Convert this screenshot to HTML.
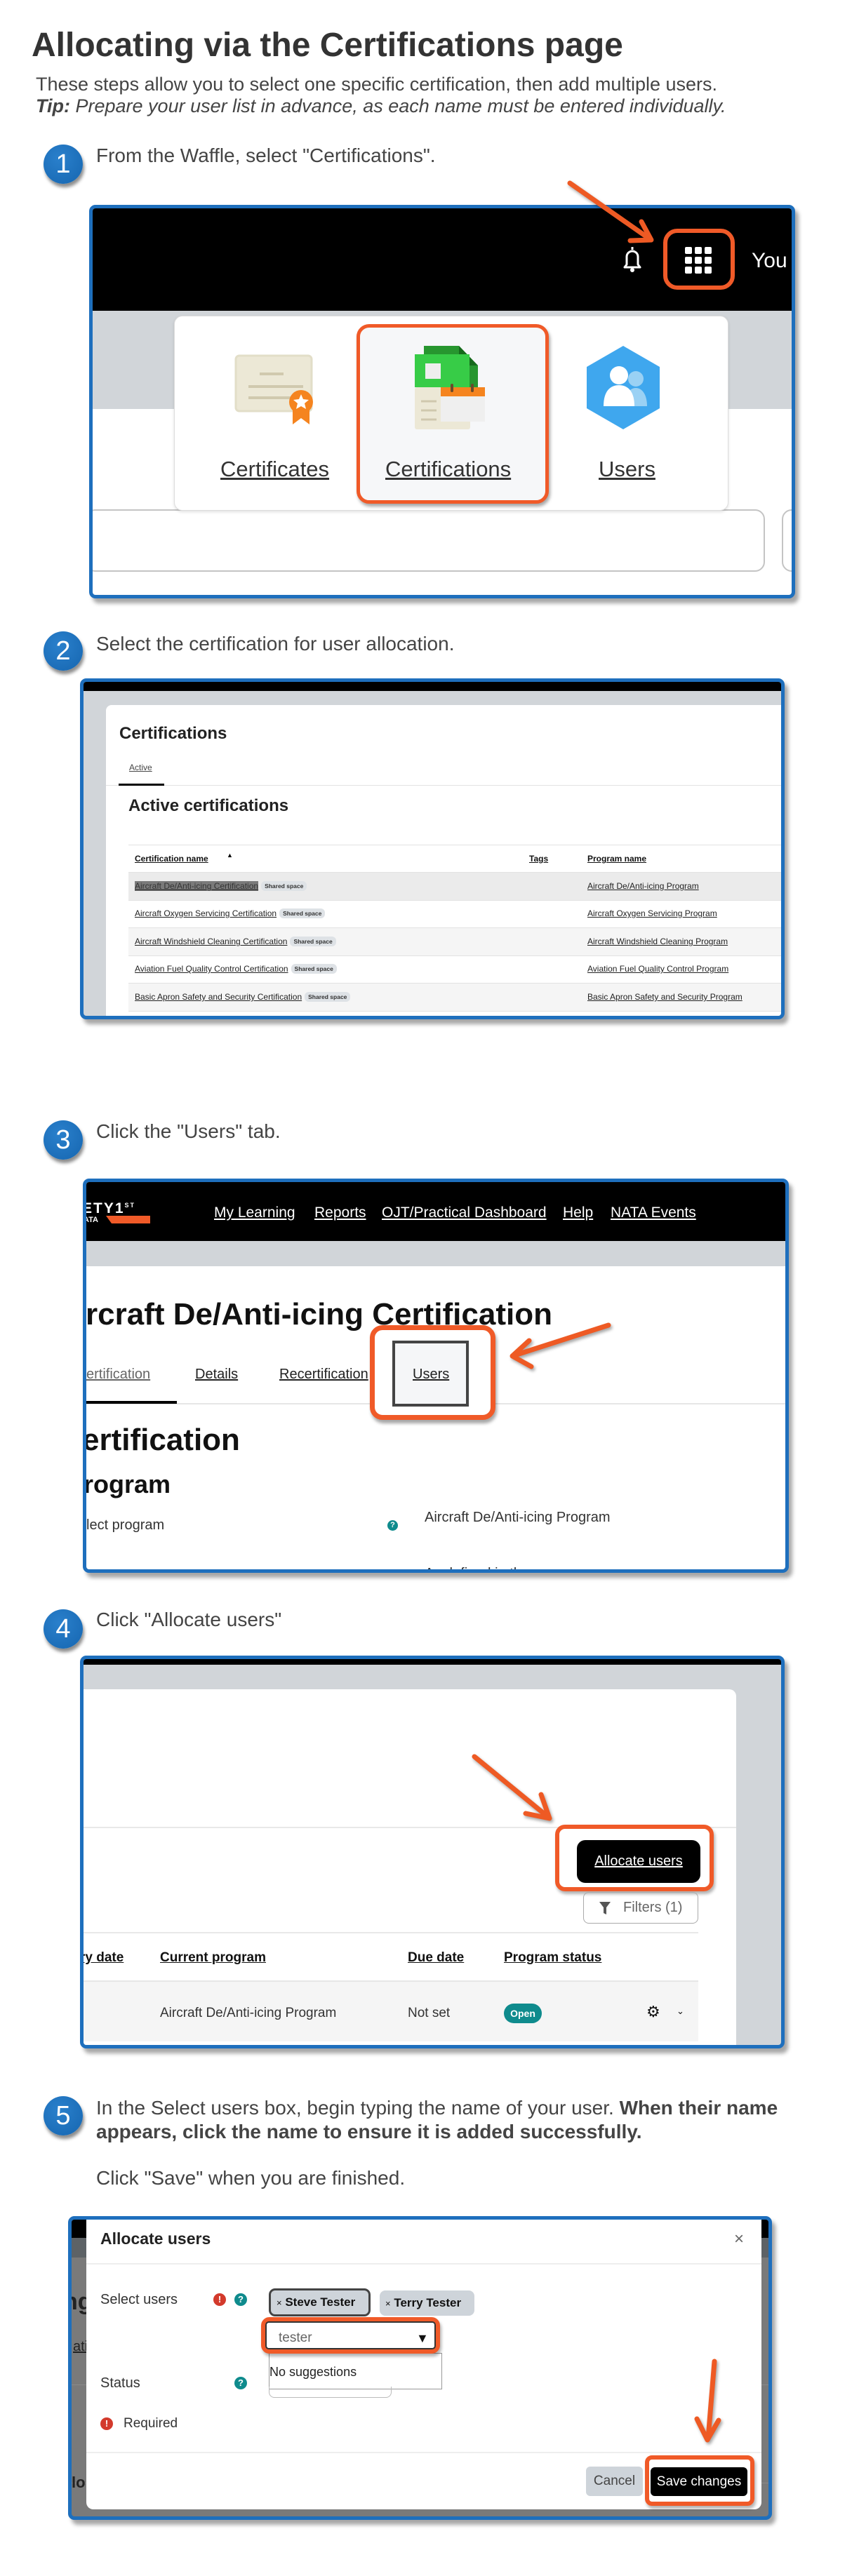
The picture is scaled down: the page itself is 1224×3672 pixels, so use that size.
<!DOCTYPE html>
<html><head><meta charset="utf-8"><style>
*{margin:0;padding:0;box-sizing:border-box}
body{width:1224px;height:3672px;background:#fff;position:relative;overflow:hidden;font-family:"Liberation Sans",Arial,sans-serif}
.a{position:absolute;white-space:nowrap}
.circ{position:absolute;width:56px;height:56px;border-radius:50%;background:radial-gradient(circle at 40% 35%,#2a80cc,#1666b0);color:#fff;font-size:38px;line-height:56px;text-align:center;box-shadow:2px 5px 5px rgba(0,0,0,.45)}
.st{position:absolute;font-size:28px;line-height:34px;color:#444;white-space:nowrap}
.fr{position:absolute;border:5px solid #1e6fbd;border-radius:9px;overflow:hidden;box-shadow:5px 7px 6px rgba(0,0,0,.35);background:#fff}
.u{text-decoration:underline}
.badge{display:inline-block;background:#dee2e6;color:#333;font-weight:bold;font-size:8.5px;padding:2px 5px;border-radius:6px;margin-left:4px;vertical-align:1px;text-decoration:none}
.row{position:absolute;left:64px;right:0;border-bottom:1px solid #e2e2e2}
.lk{position:absolute;font-size:12px;color:#222;text-decoration:underline;white-space:nowrap}
</style></head><body>

<div class="a" style="left:45px;top:36px;font-size:48px;line-height:58px;font-weight:bold;color:#333">Allocating via the Certifications page</div>
<div class="a" style="left:51px;top:104px;font-size:27px;line-height:32px;color:#444">These steps allow you to select one specific certification, then add multiple users.</div>
<div class="a" style="left:51px;top:135px;font-size:27px;line-height:32px;color:#444;font-style:italic"><b>Tip:</b> Prepare your user list in advance, as each name must be entered individually.</div>

<!-- STEP 1 -->
<div class="circ" style="left:62px;top:206px">1</div>
<div class="st" style="left:137px;top:205px">From the Waffle, select "Certifications".</div>
<div class="fr" style="left:127px;top:292px;width:1006px;height:561px">
 <div class="a" style="left:0;top:0;width:100%;height:146px;background:#000"></div>
 <div class="a" style="left:0;top:146px;width:100%;height:140px;background:#d1d5d9"></div>
 <div class="a" style="left:-10px;top:429px;width:968px;height:89px;border:2px solid #c4c4c4;border-radius:14px"></div>
 <div class="a" style="left:982px;top:429px;width:100px;height:89px;border:2px solid #c4c4c4;border-radius:14px"></div>
 <svg class="a" style="left:756px;top:52px" width="26" height="40" viewBox="0 0 26 40"><path d="M13 3v4M5 28V17a8 8 0 0 1 16 0v11l3 4H2z" fill="none" stroke="#fff" stroke-width="3" stroke-linejoin="round"/><circle cx="13" cy="36" r="3" fill="#fff"/></svg>
 <div class="a" style="left:813px;top:29px;width:102px;height:87px;border:6px solid #f05a28;border-radius:20px"></div>
 <svg class="a" style="left:844px;top:55px" width="40" height="40"><g fill="#fff"><rect x="0" y="0" width="10" height="10" rx="2"/><rect x="14" y="0" width="10" height="10" rx="2"/><rect x="28" y="0" width="10" height="10" rx="2"/><rect x="0" y="14" width="10" height="10" rx="2"/><rect x="14" y="14" width="10" height="10" rx="2"/><rect x="28" y="14" width="10" height="10" rx="2"/><rect x="0" y="28" width="10" height="10" rx="2"/><rect x="14" y="28" width="10" height="10" rx="2"/><rect x="28" y="28" width="10" height="10" rx="2"/></g></svg>
 <div class="a" style="left:939px;top:57px;font-size:30px;line-height:36px;color:#fff">You</div>
 <div class="a" style="left:116px;top:153px;width:790px;height:278px;background:#fff;border:1px solid #ddd;border-radius:12px;box-shadow:0 2px 4px rgba(0,0,0,.12)"></div>
 <div class="a" style="left:376px;top:165px;width:274px;height:256px;border:5px solid #f05a28;border-radius:18px;background:#f6f7f9;box-shadow:2px 4px 5px rgba(0,0,0,.35)"></div>
 <svg class="a" style="left:0;top:0" width="1000" height="400">
  <rect x="204" y="210" width="108" height="79" rx="5" fill="#ece8d6" stroke="#e2dec8" stroke-width="3"/>
  <g stroke="#d0c9ae" stroke-width="4"><line x1="238" y1="236" x2="272" y2="236"/><line x1="222" y1="254" x2="300" y2="254"/><line x1="222" y1="270" x2="285" y2="270"/></g>
  <path d="M285 280v28l12-9 12 9v-28z" fill="#f5841f"/><circle cx="297" cy="276" r="17" fill="#f5841f"/>
  <path d="M297 265l3 7 8 1-6 5 2 8-7-4-7 4 2-8-6-5 8-1z" fill="#fff"/>
  <path d="M472 196h50l27 28v31h-77z" fill="#27962f"/><path d="M522 196l27 28h-27z" fill="#166a1c"/>
  <rect x="459" y="208" width="78" height="47" fill="#37cc47"/><rect x="474" y="221" width="22" height="22" fill="#eee"/>
  <rect x="459" y="255" width="79" height="60" rx="3" fill="#ece8d6"/>
  <g stroke="#cfc8ae" stroke-width="3"><line x1="468" y1="275" x2="490" y2="275"/><line x1="468" y1="288" x2="490" y2="288"/><line x1="468" y1="301" x2="490" y2="301"/></g>
  <rect x="496" y="255" width="63" height="49" fill="#efefef"/><rect x="496" y="255" width="63" height="13" fill="#f5841f"/>
  <rect x="510" y="250" width="4" height="12" rx="2" fill="#6b4a2a"/><rect x="539" y="250" width="4" height="12" rx="2" fill="#6b4a2a"/>
  <path d="M756 196l52 30v59l-52 30-52-30v-59z" fill="#3fa7ee"/>
  <circle cx="774" cy="243" r="11" fill="#9ad1f4"/><path d="M758 282c0-18 8-26 16-26s16 8 16 26z" fill="#9ad1f4"/>
  <circle cx="750" cy="238" r="13" fill="#fff"/><path d="M728 282c0-22 10-30 22-30s22 8 22 30z" fill="#fff"/>
 </svg>
 <div class="a u" style="left:182px;top:354px;font-size:31px;line-height:36px;color:#333">Certificates</div>
 <div class="a u" style="left:417px;top:354px;font-size:31px;line-height:36px;color:#333">Certifications</div>
 <div class="a u" style="left:721px;top:354px;font-size:31px;line-height:36px;color:#333">Users</div>
</div>

<!-- STEP 2 -->
<div class="circ" style="left:62px;top:900px">2</div>
<div class="st" style="left:137px;top:901px">Select the certification for user allocation.</div>
<div class="fr" style="left:114px;top:967px;width:1004px;height:486px;background:#d1d5d9">
 <div class="a" style="left:0;top:0;width:100%;height:13px;background:#000"></div>
 <div class="a" style="left:32px;top:33px;right:0;bottom:0;background:#fff;border-top-left-radius:8px"></div>
 <div class="a" style="left:51px;top:60px;font-size:24px;line-height:28px;font-weight:bold;color:#222">Certifications</div>
 <div class="a u" style="left:65px;top:115px;font-size:12px;color:#444">Active</div>
 <div class="a" style="left:32px;top:147px;right:0;height:1px;background:#e2e2e2"></div>
 <div class="a" style="left:50px;top:145px;width:65px;height:3px;background:#000"></div>
 <div class="a" style="left:64px;top:163px;font-size:24px;line-height:28px;font-weight:bold;color:#222">Active certifications</div>
 <div class="a" style="left:64px;top:232px;right:0;height:1px;background:#e2e2e2"></div>
 <div class="row" style="top:233px;height:39px"></div>
 <div class="row" style="top:272px;height:40px;background:#ebebeb"></div>
 <div class="row" style="top:312px;height:39px"></div>
 <div class="row" style="top:351px;height:40px;background:#f5f5f5"></div>
 <div class="row" style="top:391px;height:39px"></div>
 <div class="row" style="top:430px;height:40px;background:#f5f5f5"></div>
 <div class="lk" style="left:73px;top:245px;font-weight:bold;color:#111">Certification name</div><div class="a" style="left:204px;top:242px;font-size:9px">▲</div>
 <div class="lk" style="left:635px;top:245px;font-weight:bold;color:#111">Tags</div>
 <div class="lk" style="left:718px;top:245px;font-weight:bold;color:#111">Program name</div>
 <div class="lk" style="left:73px;top:284px"><span style="background:#7a7a7a;color:#333">Aircraft De/Anti-icing Certification</span><span class="badge">Shared space</span></div>
 <div class="lk" style="left:73px;top:323px">Aircraft Oxygen Servicing Certification<span class="badge">Shared space</span></div>
 <div class="lk" style="left:73px;top:363px">Aircraft Windshield Cleaning Certification<span class="badge">Shared space</span></div>
 <div class="lk" style="left:73px;top:402px">Aviation Fuel Quality Control Certification<span class="badge">Shared space</span></div>
 <div class="lk" style="left:73px;top:442px">Basic Apron Safety and Security Certification<span class="badge">Shared space</span></div>
 <div class="lk" style="left:718px;top:284px">Aircraft De/Anti-icing Program</div>
 <div class="lk" style="left:718px;top:323px">Aircraft Oxygen Servicing Program</div>
 <div class="lk" style="left:718px;top:363px">Aircraft Windshield Cleaning Program</div>
 <div class="lk" style="left:718px;top:402px">Aviation Fuel Quality Control Program</div>
 <div class="lk" style="left:718px;top:442px">Basic Apron Safety and Security Program</div>
</div>

<!-- STEP 3 -->
<div class="circ" style="left:62px;top:1597px">3</div>
<div class="st" style="left:137px;top:1596px">Click the "Users" tab.</div>
<div class="fr" style="left:118px;top:1680px;width:1006px;height:562px">
 <div class="a" style="left:0;top:0;width:100%;height:84px;background:#000"></div>
 <div class="a" style="left:0;top:84px;width:100%;height:36px;background:#d1d5d9"></div>
 <div class="a" style="left:-6px;top:21px;font-size:21px;line-height:24px;font-weight:bold;color:#fff;letter-spacing:2px">ETY1<sup style="font-size:9px">ST</sup></div>
 <div class="a" style="left:-4px;top:48px;font-size:11px;font-weight:bold;color:#fff">ATA</div>
 <div class="a" style="left:28px;top:48px;width:63px;height:11px;background:#f05a28;clip-path:polygon(0 0,100% 0,100% 100%,8px 100%)"></div>
 <div class="a u" style="left:182px;top:31px;font-size:21px;line-height:26px;color:#fff">My Learning</div>
 <div class="a u" style="left:325px;top:31px;font-size:21px;line-height:26px;color:#fff">Reports</div>
 <div class="a u" style="left:421px;top:31px;font-size:21px;line-height:26px;color:#fff">OJT/Practical Dashboard</div>
 <div class="a u" style="left:679px;top:31px;font-size:21px;line-height:26px;color:#fff">Help</div>
 <div class="a u" style="left:747px;top:31px;font-size:21px;line-height:26px;color:#fff">NATA Events</div>
 <div class="a" style="left:-1px;top:162px;font-size:44px;line-height:54px;font-weight:bold;color:#111">rcraft De/Anti-icing Certification</div>
 <div class="a" style="left:0;top:315px;width:100%;height:2px;background:#e6e6e6"></div>
 <div class="a" style="left:0;top:312px;width:129px;height:4px;background:#000"></div>
 <div class="a u" style="left:0;top:261px;font-size:20px;line-height:26px;color:#666">ertification</div>
 <div class="a u" style="left:155px;top:261px;font-size:20px;line-height:26px;color:#222">Details</div>
 <div class="a u" style="left:275px;top:261px;font-size:20px;line-height:26px;color:#222">Recertification</div>
 <div class="a" style="left:404px;top:204px;width:179px;height:135px;border:7px solid #f05a28;border-radius:18px;background:#fff;box-shadow:2px 5px 5px rgba(0,0,0,.35)"></div>
 <div class="a" style="left:436px;top:226px;width:109px;height:94px;border:4px solid #444;background:#f5f6f8"></div>
 <div class="a u" style="left:465px;top:261px;font-size:20px;line-height:26px;color:#222">Users</div>
 <div class="a" style="left:-6px;top:341px;font-size:44px;line-height:54px;font-weight:bold;color:#111">ertification</div>
 <div class="a" style="left:-4px;top:409px;font-size:36px;line-height:44px;font-weight:bold;color:#111">rogram</div>
 <div class="a" style="left:0;top:476px;font-size:20px;line-height:26px;color:#333">lect program</div>
 <div class="a" style="left:429px;top:482px;width:15px;height:15px;border-radius:50%;background:#0f8b8d;color:#fff;font-size:11px;font-weight:bold;line-height:15px;text-align:center">?</div>
 <div class="a" style="left:482px;top:465px;font-size:20px;line-height:26px;color:#333">Aircraft De/Anti-icing Program</div>
 <div class="a" style="left:482px;top:545px;font-size:20px;line-height:26px;color:#333">As defined in the program</div>
</div>

<!-- STEP 4 -->
<div class="circ" style="left:62px;top:2294px">4</div>
<div class="st" style="left:137px;top:2292px">Click "Allocate users"</div>
<div class="fr" style="left:114px;top:2360px;width:1004px;height:560px;background:#d1d5d9">
 <div class="a" style="left:0;top:0;width:100%;height:8px;background:#000"></div>
 <div class="a" style="left:0;top:43px;width:930px;bottom:0;background:#fff;border-top-right-radius:10px"></div>
 <div class="a" style="left:0;top:239px;width:930px;height:2px;background:#e8e8e8"></div>
 <div class="a" style="left:672px;top:236px;width:226px;height:95px;border:6px solid #f05a28;border-radius:14px;box-shadow:2px 4px 4px rgba(0,0,0,.3)"></div>
 <div class="a u" style="left:703px;top:258px;width:176px;height:61px;background:#000;border-radius:12px;color:#fff;font-size:20px;line-height:61px;text-align:center">Allocate users</div>
 <div class="a" style="left:712px;top:332px;width:164px;height:45px;border:1.5px solid #aaa;border-radius:8px;color:#666;font-size:20px;line-height:42px;padding-left:56px">Filters (1)</div>
 <svg class="a" style="left:734px;top:345px" width="18" height="20"><path d="M1 1h16l-6 8v10l-4-2V9z" fill="#555"/></svg>
 <div class="a" style="left:0;top:389px;width:876px;height:2px;background:#e8e8e8"></div>
 <div class="a u" style="left:-5px;top:413px;font-size:19px;line-height:26px;font-weight:bold;color:#111">ry date</div>
 <div class="a u" style="left:109px;top:413px;font-size:19px;line-height:26px;font-weight:bold;color:#111">Current program</div>
 <div class="a u" style="left:462px;top:413px;font-size:19px;line-height:26px;font-weight:bold;color:#111">Due date</div>
 <div class="a u" style="left:599px;top:413px;font-size:19px;line-height:26px;font-weight:bold;color:#111">Program status</div>
 <div class="a" style="left:0;top:458px;width:876px;height:87px;background:#f5f5f5;border-top:2px solid #e6e6e6"></div>
 <div class="a" style="left:109px;top:492px;font-size:19px;line-height:26px;color:#333">Aircraft De/Anti-icing Program</div>
 <div class="a" style="left:462px;top:492px;font-size:19px;line-height:26px;color:#333">Not set</div>
 <div class="a" style="left:599px;top:491px;width:54px;height:28px;border-radius:14px;background:#0f8b8d;color:#fff;font-size:14px;font-weight:bold;line-height:28px;text-align:center">Open</div>
 <div class="a" style="left:802px;top:490px;font-size:22px;line-height:26px;color:#111">⚙</div>
 <div class="a" style="left:845px;top:494px;font-size:13px;color:#111">⌄</div>
</div>

<!-- STEP 5 -->
<div class="circ" style="left:62px;top:2988px">5</div>
<div class="st" style="left:137px;top:2988px">In the Select users box, begin typing the name of your user. <b>When their name</b></div>
<div class="st" style="left:137px;top:3022px"><b>appears, click the name to ensure it is added successfully.</b></div>
<div class="st" style="left:137px;top:3088px">Click "Save" when you are finished.</div>
<div class="fr" style="left:97px;top:3159px;width:1003px;height:433px;background:#7a7a7a">
 <div class="a" style="left:0;top:0;width:100%;height:26px;background:#000"></div>
 <div class="a" style="left:0;top:26px;width:100%;height:28px;background:#5d6266"></div>
 <div class="a" style="left:0;top:235px;width:100%;height:1px;background:#8a8a8a"></div>
 <div class="a" style="left:0;top:375px;width:100%;height:1px;background:#8a8a8a"></div>
 <div class="a" style="left:-12px;top:98px;font-size:34px;font-weight:bold;color:#222">ng</div>
 <div class="a u" style="left:2px;top:170px;font-size:20px;color:#222">ati</div>
 <div class="a" style="left:0;top:362px;font-size:22px;font-weight:bold;color:#222">lo</div>
 <div class="a" style="left:21px;top:0;width:962px;height:413px;background:#fff;border-radius:0 0 10px 10px">
  <div class="a" style="left:20px;top:13px;font-size:23px;line-height:28px;font-weight:bold;color:#222">Allocate users</div>
  <div class="a" style="left:923px;top:14px;font-size:24px;color:#666">×</div>
  <div class="a" style="left:0;top:62px;width:100%;height:2px;background:#eee"></div>
  <div class="a" style="left:20px;top:101px;font-size:20px;line-height:26px;color:#333">Select users</div>
  <div class="a" style="left:181px;top:105px;width:18px;height:18px;border-radius:50%;background:#d33a2c;color:#fff;font-size:13px;font-weight:bold;line-height:18px;text-align:center">!</div>
  <div class="a" style="left:211px;top:105px;width:18px;height:18px;border-radius:50%;background:#0f8b8d;color:#fff;font-size:13px;font-weight:bold;line-height:18px;text-align:center">?</div>
  <div class="a" style="left:260px;top:98px;width:145px;height:40px;background:#ced4da;border:3px solid #444;border-radius:9px;font-size:17px;line-height:34px;padding-left:8px;color:#111"><span style="font-size:13px">×</span> <b>Steve Tester</b></div>
  <div class="a" style="left:418px;top:101px;width:135px;height:36px;background:#ced4da;border-radius:8px;font-size:17px;line-height:36px;padding-left:8px;color:#111"><span style="font-size:13px">×</span> <b>Terry Tester</b></div>
  <div class="a" style="left:260px;top:190px;width:247px;height:52px;border:1px solid #999;background:#fff"></div>
  <div class="a" style="left:260px;top:238px;width:175px;height:16px;border:1px solid #bbb;border-top:none;border-radius:0 0 8px 8px"></div>
  <div class="a" style="left:261px;top:205px;font-size:18px;line-height:24px;color:#222">No suggestions</div>
  <div class="a" style="left:249px;top:139px;width:255px;height:52px;border:6px solid #f05a28;border-radius:12px;background:#fff;box-shadow:2px 4px 4px rgba(0,0,0,.3)"><div style="position:absolute;inset:0;border:2px solid #333;border-radius:5px"></div></div>
  <div class="a" style="left:274px;top:156px;font-size:19px;line-height:26px;color:#666">tester</div>
  <div class="a" style="left:470px;top:156px;font-size:18px;line-height:26px;color:#111">▼</div>
  <div class="a" style="left:20px;top:220px;font-size:20px;line-height:26px;color:#333">Status</div>
  <div class="a" style="left:211px;top:224px;width:18px;height:18px;border-radius:50%;background:#0f8b8d;color:#fff;font-size:13px;font-weight:bold;line-height:18px;text-align:center">?</div>
  <div class="a" style="left:20px;top:282px;width:18px;height:18px;border-radius:50%;background:#d33a2c;color:#fff;font-size:13px;font-weight:bold;line-height:18px;text-align:center">!</div>
  <div class="a" style="left:53px;top:278px;font-size:19px;line-height:26px;color:#333">Required</div>
  <div class="a" style="left:0;top:331px;width:100%;height:2px;background:#eee"></div>
  <div class="a" style="left:712px;top:352px;width:81px;height:42px;background:#ced4da;border-radius:6px;font-size:19px;line-height:42px;text-align:center;color:#444">Cancel</div>
  <div class="a" style="left:796px;top:336px;width:156px;height:72px;border:6px solid #f05a28;border-radius:10px;box-shadow:2px 4px 4px rgba(0,0,0,.3)"></div>
  <div class="a" style="left:804px;top:353px;width:138px;height:41px;background:#000;border-radius:6px;font-size:19px;line-height:41px;text-align:center;color:#fff">Save changes</div>
 </div>
</div>

<!-- arrows -->
<svg class="a" style="left:0;top:0;pointer-events:none" width="1224" height="3672">
 <g fill="none" stroke="#ee5a24" stroke-width="7" stroke-linecap="round" stroke-linejoin="round" filter="drop-shadow(2px 3px 2px rgba(0,0,0,.35))">
  <path d="M812 261L925 340"/><path d="M914 316L928 342L898 343"/>
  <path d="M867 1889L733 1932"/><path d="M754 1911L730 1933L757 1948"/>
  <path d="M676 2504L781 2590"/><path d="M771 2558L783 2592L749 2585"/>
  <path d="M1018 3366L1009 3476"/><path d="M993 3448L1008 3478L1024 3450"/>
 </g>
</svg>
</body></html>
